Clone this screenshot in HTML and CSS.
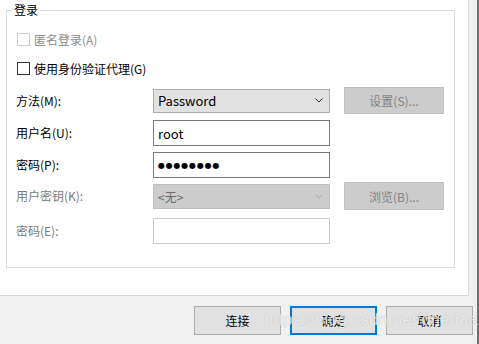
FILE: index.html
```html
<!DOCTYPE html>
<html>
<head>
<meta charset="utf-8">
<link rel="stylesheet" href="styles.css">
</head>
<body>
<div class="window">
  <div class="panel">
    <fieldset class="group">
      <legend class="legend">登录</legend>
      <div class="check disabled first"><span class="box"></span><span>匿名登录(A)</span></div>
      <div class="check second"><span class="box"></span><span>使用身份验证代理(G)</span></div>

      <div class="row r1">
        <span class="label">方法(M):</span>
        <div class="select h24"><span>Password</span>
          <svg class="chev" width="8" height="5" viewBox="0 0 8 5"><polyline points="0.5,0.5 4,4 7.5,0.5" fill="none" stroke="#333" stroke-width="1"/></svg>
        </div>
        <div class="btn dis">设置(S)...</div>
      </div>

      <div class="row r2">
        <span class="label">用户名(U):</span>
        <div class="input">root</div>
      </div>

      <div class="row r3">
        <span class="label">密码(P):</span>
        <div class="input dots">●●●●●●●●</div>
      </div>

      <div class="row r4">
        <span class="label gray">用户密钥(K):</span>
        <div class="select dis-sel h25"><span>&lt;无&gt;</span>
          <svg class="chev" width="8" height="5" viewBox="0 0 8 5"><polyline points="0.5,0.5 4,4 7.5,0.5" fill="none" stroke="#a8a8a8" stroke-width="1"/></svg>
        </div>
        <div class="btn dis">浏览(B)...</div>
      </div>

      <div class="row r5">
        <span class="label gray">密码(E):</span>
        <div class="input dis-in"></div>
      </div>
    </fieldset>
  </div>
  <div class="footer">
    <div class="fbtn">连接</div>
    <div class="fbtn default">确定</div>
    <div class="fbtn">取消</div>
    <div class="watermark">https://blog.csdn.net/dnedaa</div>
  </div>
</div>
</body>
</html>
```
FILE: styles.css
```css
* { box-sizing: border-box; }
html, body { margin: 0; padding: 0; }
body {
  width: 479px;
  height: 344px;
  overflow: hidden;
  font-family: "Noto Sans CJK SC", "Noto Sans", sans-serif;
  font-size: 12px;
  color: #000;
}
.window {
  position: relative;
  width: 479px;
  height: 344px;
  background: #f0f0f0;
  border-right: 2px solid #6e6e6e;
  display: flex;
  flex-direction: column;
}
.panel {
  width: 469px;
  height: 296px;
  background: #fff;
  border-right: 1px solid #dadada;
  border-bottom: 1px solid #d6d6d6;
  padding: 2px 0 0 6px;
}
.group {
  margin: 0;
  padding: 0 0 0 9px;
  width: 449px;
  height: 266px;
  border: 1px solid #dcdcdc;
  min-width: 0;
}
.legend {
  margin-left: -4px;
  padding: 0 2px;
  font-size: 12px;
  line-height: 16px;
}
.check {
  display: flex;
  align-items: center;
  height: 13px;
  gap: 4px;
  margin-left: 1px;
}
.check.first { margin-top: 15px; }
.check.second { margin-top: 16px; }
.box {
  width: 13px;
  height: 13px;
  border: 1px solid #333;
  background: #fff;
}
.check.disabled { color: #8d8d8d; }
.check.disabled .box { border-color: #cccccc; }
.row {
  display: flex;
  align-items: center;
}
.label {
  width: 137px;
  flex: none;
  line-height: 16px;
}
.label.gray { color: #7a7a7a; }
.r1 { margin-top: 12px; height: 27px; }
.r2 { margin-top: 6px; height: 26px; }
.r3 { margin-top: 6px; height: 26px; }
.r4 { margin-top: 4px; height: 28px; }
.r5 { margin-top: 8px; height: 26px; }
.select {
  width: 177px;
  flex: none;
  background: #e1e1e1;
  border: 1px solid #adadad;
  display: flex;
  align-items: center;
  justify-content: space-between;
  padding: 0 6px 0 4px;
  font-size: 13px;
}
.h24 { height: 24px; }
.h25 { height: 25px; }
.select.dis-sel {
  background: #cccccc;
  border-color: #bfbfbf;
  color: #6d6d6d;
  font-size: 12px;
}
.chev { display: block; }
.input {
  width: 177px;
  height: 26px;
  flex: none;
  border: 1px solid #7a7a7a;
  background: #fff;
  padding: 0 4px;
  display: flex;
  align-items: center;
  font-size: 13px;
}
.input.dots {
  font-size: 8px;
  letter-spacing: 0.8px;
  font-family: "DejaVu Sans", sans-serif;
}
.input.dis-in { border-color: #cccccc; }
.btn {
  margin-left: 14px;
  width: 100px;
  height: 27px;
  flex: none;
  display: flex;
  align-items: center;
  justify-content: center;
}
.btn.dis {
  background: #cccccc;
  border: 1px solid #bfbfbf;
  color: #838383;
}
.r4 .btn { height: 28px; }
.footer {
  flex: 1;
  display: flex;
  justify-content: flex-end;
  align-items: flex-start;
  gap: 9px;
  padding: 10px 4px 0 0;
}
.fbtn {
  width: 87px;
  height: 29px;
  background: #e1e1e1;
  border: 1px solid #adadad;
  display: flex;
  align-items: center;
  justify-content: center;
}
.fbtn.default { border: 2px solid #0078d7; }
.watermark {
  position: absolute;
  left: 264px;
  top: 310px;
  font-family: "Liberation Sans", Arial, sans-serif;
  font-size: 17px;
  color: rgba(255, 255, 255, 0.7);
  text-shadow: 0 0 1px rgba(120, 120, 120, 0.45);
  white-space: nowrap;
}
```
